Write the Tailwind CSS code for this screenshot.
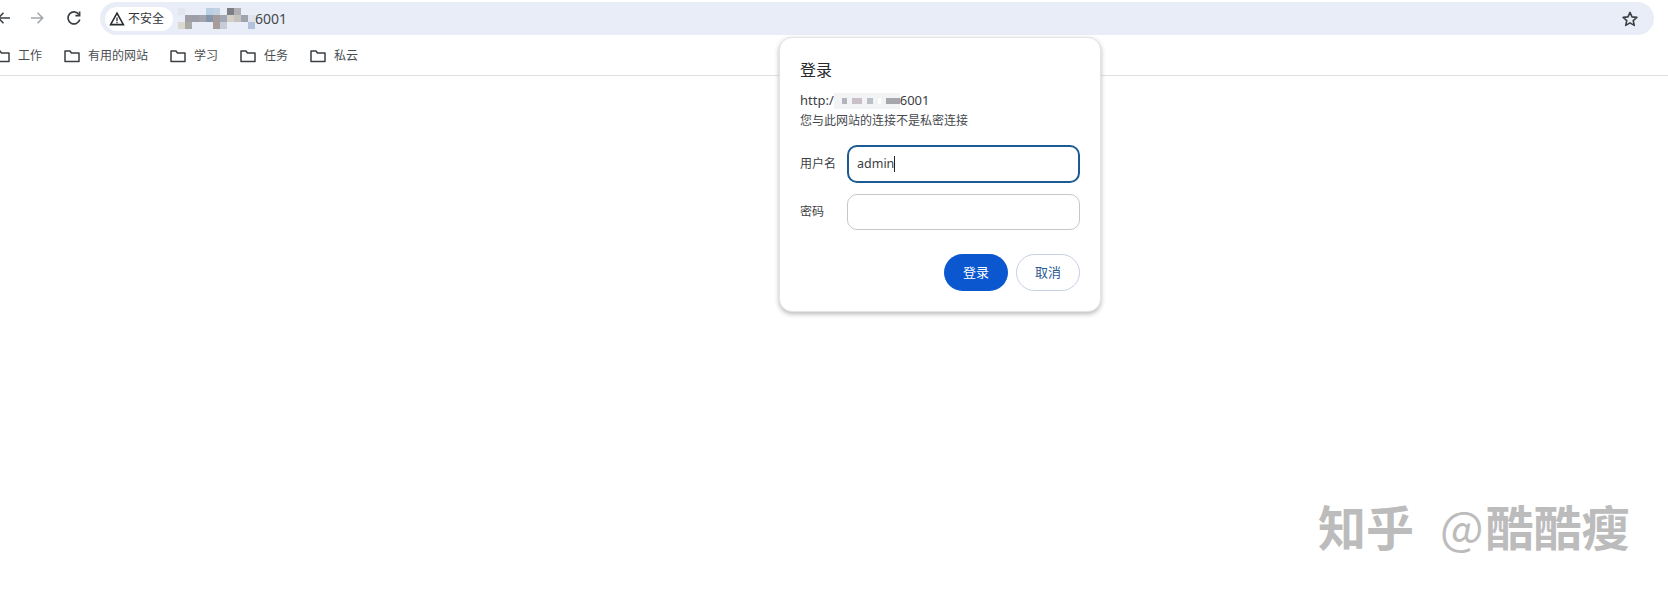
<!DOCTYPE html>
<html lang="zh-CN">
<head>
<meta charset="utf-8">
<script src="https://cdn.jsdelivr.net/npm/@tailwindcss/browser@4"></script>
</head>
<body class="bg-white overflow-hidden font-['Noto_Sans','Noto_Sans_CJK_SC',sans-serif]">
<div class="relative w-[1668px] h-[596px] overflow-hidden">
  <!-- toolbar -->
  <div class="h-[36px] flex items-center pr-[14px] bg-white">
    <div class="flex items-center ml-[-6px] w-[106px] shrink-0">
      <svg class="w-[20px] h-[20px] shrink-0 mr-[13px] text-[#3c4043]" viewBox="0 0 20 20" fill="none" stroke="currentColor" stroke-width="1.6"><path d="M16 10H4.5M9.5 4.8 4.3 10l5.2 5.2"/></svg>
      <svg class="w-[20px] h-[20px] shrink-0 mr-[17px] text-[#a3a6aa]" viewBox="0 0 20 20" fill="none" stroke="currentColor" stroke-width="1.6"><path d="M4 10h11.5M10.5 4.8 15.7 10l-5.2 5.2"/></svg>
      <svg class="w-[20px] h-[20px] shrink-0 text-[#3c4043]" viewBox="0 0 20 20" fill="none" stroke="currentColor" stroke-width="1.7"><path d="M15 6.6A6 6 0 1 0 15.8 11.5"/><path d="M15.6 3.4v4.2h-4.2" /></svg>
    </div>
    <div class="flex-1 h-[33px] mt-[1px] rounded-full bg-[#e9edf7] flex items-center pl-[5px] pr-[15px]">
      <div class="h-[24px] w-[68px] rounded-full bg-white flex items-center gap-[3px] pl-[4px] shrink-0">
        <svg class="w-[16px] h-[16px] shrink-0 text-[#2a2c30]" viewBox="0 0 15 15" fill="none" stroke="currentColor" stroke-width="1.5"><path d="M7.5 2 1.5 12.8h12Z"/><path d="M7.5 6v3.6M7.5 10.4v1.2" stroke-width="1.2"/></svg>
        <span class="text-[12px] leading-none text-[#33363a]">不安全</span>
      </div>
      <div class="ml-[5px] grid grid-cols-[repeat(11,7px)] grid-rows-[repeat(3,7px)] shrink-0">
        <i class="bg-[#e3e6ed]"></i><i class="bg-[#e9edf7]"></i><i class="bg-[#e9edf7]"></i><i class="bg-[#e9edf7]"></i><i class="bg-[#b9cfe3]"></i><i class="bg-[#c3d2e2]"></i><i class="bg-[#e9edf7]"></i><i class="bg-[#7d7f86]"></i><i class="bg-[#b1aeb4]"></i><i class="bg-[#e9edf7]"></i><i class="bg-[#e9edf7]"></i>
        <i class="bg-[#e9edf7]"></i><i class="bg-[#a09ea6]"></i><i class="bg-[#9d9fa8]"></i><i class="bg-[#a3a5ae]"></i><i class="bg-[#8596ac]"></i><i class="bg-[#a59a9c]"></i><i class="bg-[#9fa8b5]"></i><i class="bg-[#d5cfc7]"></i><i class="bg-[#c6c2bd]"></i><i class="bg-[#9ea3ae]"></i><i class="bg-[#e0e3ec]"></i>
        <i class="bg-[#dcd8cf]"></i><i class="bg-[#a8aba5]"></i><i class="bg-[#e9edf7]"></i><i class="bg-[#e9edf7]"></i><i class="bg-[#e9edf7]"></i><i class="bg-[#a89d9c]"></i><i class="bg-[#c7cdd6]"></i><i class="bg-[#e9edf7]"></i><i class="bg-[#e9edf7]"></i><i class="bg-[#e9edf7]"></i><i class="bg-[#b2c2da]"></i>
      </div>
      <span class="text-[14px] leading-none text-[#45484c]">6001</span>
      <svg class="ml-auto w-[18px] h-[18px] shrink-0 text-[#3c4043]" viewBox="0 0 18 18" fill="none" stroke="currentColor" stroke-width="1.6" stroke-linejoin="round"><path d="m9 2.4 2 4.5 4.9.5-3.7 3.2 1.1 4.8L9 12.9l-4.3 2.5 1.1-4.8-3.7-3.2 4.9-.5Z"/></svg>
    </div>
  </div>
  <!-- bookmarks -->
  <div class="h-[40px] border-b border-[#dfe1e5] flex items-center ml-[-6px] gap-[22px] text-[12px] text-[#4a4d51]">
    <div class="flex items-center gap-[8px]"><svg class="w-[16px] h-[14px] text-[#3c4043]" viewBox="0 0 16 14" fill="none" stroke="currentColor" stroke-width="1.5" stroke-linejoin="round"><path d="M1 2h5l1.5 2H15v8.5H1Z"/></svg><span>工作</span></div>
    <div class="flex items-center gap-[8px]"><svg class="w-[16px] h-[14px] text-[#3c4043]" viewBox="0 0 16 14" fill="none" stroke="currentColor" stroke-width="1.5" stroke-linejoin="round"><path d="M1 2h5l1.5 2H15v8.5H1Z"/></svg><span>有用的网站</span></div>
    <div class="flex items-center gap-[8px]"><svg class="w-[16px] h-[14px] text-[#3c4043]" viewBox="0 0 16 14" fill="none" stroke="currentColor" stroke-width="1.5" stroke-linejoin="round"><path d="M1 2h5l1.5 2H15v8.5H1Z"/></svg><span>学习</span></div>
    <div class="flex items-center gap-[8px]"><svg class="w-[16px] h-[14px] text-[#3c4043]" viewBox="0 0 16 14" fill="none" stroke="currentColor" stroke-width="1.5" stroke-linejoin="round"><path d="M1 2h5l1.5 2H15v8.5H1Z"/></svg><span>任务</span></div>
    <div class="flex items-center gap-[8px]"><svg class="w-[16px] h-[14px] text-[#3c4043]" viewBox="0 0 16 14" fill="none" stroke="currentColor" stroke-width="1.5" stroke-linejoin="round"><path d="M1 2h5l1.5 2H15v8.5H1Z"/></svg><span>私云</span></div>
  </div>
  <!-- dialog -->
  <div class="absolute left-[779px] top-[37px] w-[322px] h-[275px] bg-white rounded-[13px] border border-[#e3e4e6] shadow-[0_2px_5px_rgba(0,0,0,0.28)] pl-[20px] pr-[20px] pt-[20px] flex flex-col">
    <div class="text-[16px] leading-[24px] text-[#26282b]">登录</div>
    <div class="mt-[9px] flex items-center h-[20px] text-[13px] text-[#3c4043]">
      <span>http:/</span>
      <div class="flex items-center gap-[5px] w-[66px] h-[16px] bg-[#f2f3f5] pl-[8px] shrink-0">
        <i class="w-[6px] h-[6px] bg-[#b3b3ba]"></i><i class="w-[10px] h-[6px] bg-[#c8bfc8]"></i><i class="w-[6px] h-[6px] bg-[#b9c0c6]"></i><i class="w-[4px] h-[6px] bg-white"></i><i class="w-[14px] h-[6px] bg-[#a8a6ad]"></i>
      </div>
      <span>6001</span>
    </div>
    <div class="h-[20px] text-[12px] leading-[20px] text-[#45484c]">您与此网站的连接不是私密连接</div>
    <div class="mt-[14px] flex items-center gap-[11px]">
      <span class="w-[36px] text-[12px] text-[#3c4043] shrink-0">用户名</span>
      <div class="flex-1 h-[38px] rounded-[10px] border-2 border-[#1c5a94] flex items-center pl-[8px] text-[12.5px] text-[#3c4043]">admin<span class="w-px h-[16px] bg-[#202124]"></span></div>
    </div>
    <div class="mt-[11px] flex items-center gap-[11px]">
      <span class="w-[36px] text-[12px] text-[#3c4043] shrink-0">密码</span>
      <div class="flex-1 h-[36px] rounded-[10px] border border-[#c4c7cc]"></div>
    </div>
    <div class="mt-[24px] flex justify-end gap-[8px]">
      <div class="w-[64px] h-[37px] rounded-full bg-[#0b57d0] text-white text-[13px] flex items-center justify-center">登录</div>
      <div class="w-[64px] h-[37px] rounded-full border border-[#c5d0e2] text-[#2b5a94] text-[13px] flex items-center justify-center">取消</div>
    </div>
  </div>
  <!-- watermark -->
  <div class="absolute left-[1318px] top-[491px] flex items-center text-[48px] leading-[68px] font-bold text-[#bcbcbc] font-['Noto_Sans_CJK_SC',sans-serif]">
    <span>知乎</span><span class="ml-[26px] font-normal text-[46px]">@</span><span class="ml-[2px]">酷酷瘦</span>
  </div>
</div>
</body>
</html>
